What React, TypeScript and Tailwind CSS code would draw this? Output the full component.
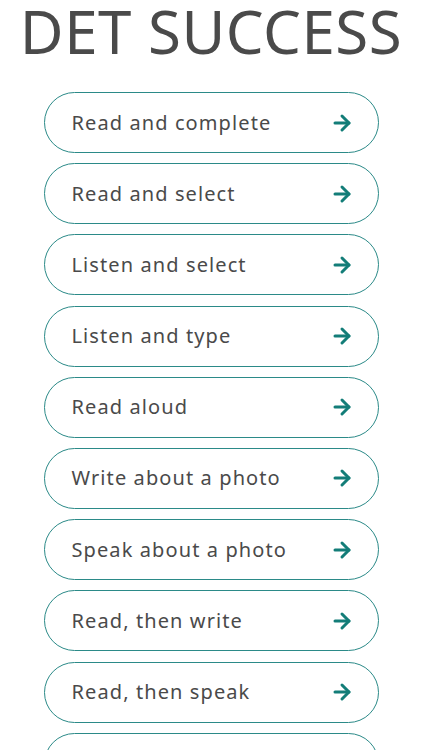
import React from 'react';
import { ArrowRight } from 'lucide-react';

const tasks = [
  'Read and complete',
  'Read and select',
  'Listen and select',
  'Listen and type',
  'Read aloud',
  'Write about a photo',
  'Speak about a photo',
  'Read, then write',
  'Read, then speak',
  'Listen, then speak',
];

const App: React.FC = () => {
  return (
    <div className="h-screen bg-white overflow-hidden" style={{ fontFamily: '"Noto Sans", "Open Sans", sans-serif' }}>
      <h1 className="text-center text-[60px] leading-[72px] -mt-[5px] font-normal text-[#4a4a4a] tracking-[0.5px]">
        DET SUCCESS
      </h1>
      <div className="flex flex-col items-center gap-[10.2px] mt-[25px]">
        {tasks.map((t) => (
          <button
            key={t}
            className="w-[335px] h-[61px] shrink-0 rounded-full border border-[#2b8a88] flex items-center justify-between pl-[27px] pr-[24px] bg-white"
          >
            <span className="text-[20px] text-[#4a4a4a] tracking-[1.1px]">{t}</span>
            <ArrowRight className="w-6 h-6 text-[#137d78]" strokeWidth={3} />
          </button>
        ))}
      </div>
    </div>
  );
};

export default App;
